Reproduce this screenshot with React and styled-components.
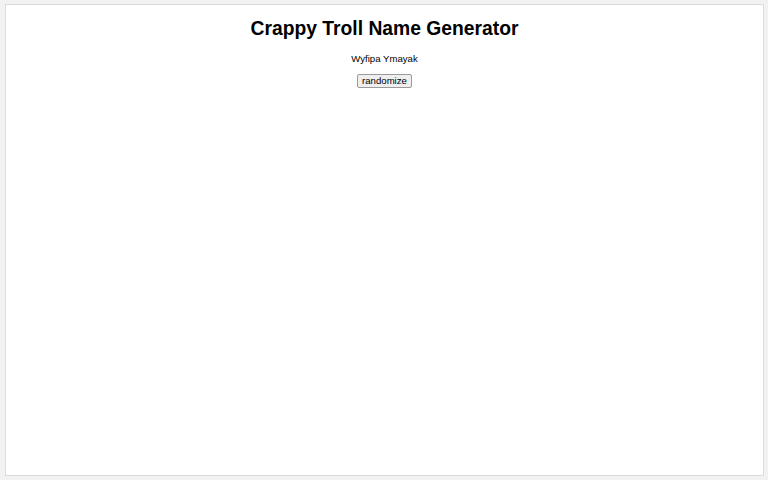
import React, { useState } from "react";
import styled, { createGlobalStyle } from "styled-components";

const GlobalStyle = createGlobalStyle`
  html, body {
    margin: 0;
    height: 100%;
    background: #f2f2f2;
    font-family: "Liberation Sans", Arial, sans-serif;
  }
  #root {
    height: 100%;
  }
`;

const Page = styled.div`
  box-sizing: border-box;
  height: 100%;
  padding: 4px 4px 4px 5px;
`;

const Panel = styled.main`
  box-sizing: border-box;
  height: 100%;
  background: #fff;
  border: 1px solid #dcdcdc;
  display: flex;
  flex-direction: column;
  align-items: center;
  padding-top: 14px;
`;

const Title = styled.h1`
  margin: 0;
  font-size: 19.3px;
  font-weight: bold;
  color: #000;
  line-height: 20px;
`;

const Name = styled.p`
  margin: 14px 0 0;
  font-size: 9.6px;
  line-height: 12px;
  color: #000;
`;

const Button = styled.button`
  margin-top: 9px;
  font-family: "Liberation Sans", Arial, sans-serif;
  font-size: 9.6px;
  line-height: 10px;
  padding: 1px 4px;
  color: #000;
  background: #efefef;
  border: 1px solid #9a9a9a;
  border-radius: 2px;
`;

const first = ["Wyfipa", "Grubnak", "Ozzilo", "Murga", "Thrakka"];
const last = ["Ymayak", "Bogfoot", "Stonejaw", "Muddle", "Grizznak"];

const pick = (list) => list[Math.floor(Math.random() * list.length)];

export default function App() {
  const [name, setName] = useState("Wyfipa Ymayak");

  return (
    <>
      <GlobalStyle />
      <Page>
        <Panel>
          <Title>Crappy Troll Name Generator</Title>
          <Name>{name}</Name>
          <Button onClick={() => setName(`${pick(first)} ${pick(last)}`)}>
            randomize
          </Button>
        </Panel>
      </Page>
    </>
  );
}
